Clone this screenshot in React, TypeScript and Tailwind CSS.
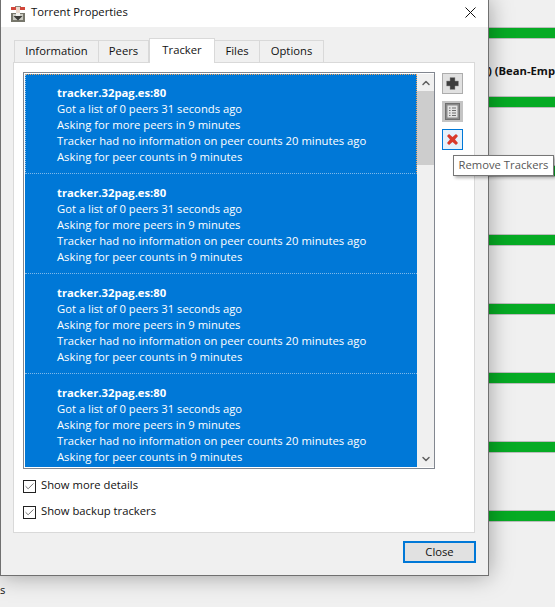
import { Check, ChevronDown, ChevronUp } from 'lucide-react';

const FONT = 'font-["Open_Sans","Noto_Sans",sans-serif]';

function TorrentIcon() {
  return (
    <svg width="16" height="16" viewBox="0 0 16 16" className="shrink-0">
      <rect x="1" y="7" width="14" height="9" fill="#77776c" />
      <rect x="3" y="8" width="10" height="6" fill="#c9c9c0" />
      <rect x="6" y="6" width="4" height="5" fill="#f2f2ee" />
      <path d="M3.5 10 H12.5 L8 14.5 Z" fill="#3c3c38" />
      <rect x="5" y="0" width="6" height="1" fill="#8a8a80" />
      <rect x="1" y="1" width="5" height="3" fill="#d2473a" />
      <rect x="10" y="1" width="5" height="3" fill="#d2473a" />
      <rect x="6" y="1" width="4" height="6" fill="#e9d8cc" />
    </svg>
  );
}

function Tab({ label, active, width }: { label: string; active?: boolean; width: string }) {
  if (active) {
    return (
      <div className={`${width} h-[25px] -mb-px z-10 flex items-center justify-center bg-white border border-b-0 border-[#d9d9d9]`}>
        <span className="-mt-[2px]">{label}</span>
      </div>
    );
  }
  return (
    <div className={`${width} h-[22px] flex items-center justify-center bg-[#f0f0f0] border border-b-0 border-l-0 first:border-l border-[#d9d9d9]`}>
      {label}
    </div>
  );
}

function TrackerItem({ first }: { first?: boolean }) {
  return (
    <div
      className={`h-[100px] shrink-0 leading-[16px] border-b border-dotted border-[#7fb9ea] ${
        first
          ? 'pl-[31px] pt-[10px] border-t border-x border-t-[#f0a35c] border-r-[#f0a35c] border-l-[#9cc8ee]'
          : 'pl-[32px] pt-[11px]'
      }`}
    >
      <div className="font-bold">tracker.32pag.es:80</div>
      <div>Got a list of 0 peers 31 seconds ago</div>
      <div>Asking for more peers in 9 minutes</div>
      <div>Tracker had no information on peer counts 20 minutes ago</div>
      <div>Asking for peer counts in 9 minutes</div>
    </div>
  );
}

function CheckRow({ label }: { label: string }) {
  return (
    <div className="flex items-center gap-[5px] h-[14px]">
      <div className="w-[13px] h-[13px] border border-[#222] bg-white flex items-center justify-center">
        <Check size={13} strokeWidth={1.8} className="text-[#555]" />
      </div>
      <span className="-mt-[2px]">{label}</span>
    </div>
  );
}

function SideButton({ children, tone }: { children: React.ReactNode; tone: 'plain' | 'off' | 'hover' }) {
  const cls =
    tone === 'hover'
      ? 'border-[#0078d7] bg-[#e5f1fb]'
      : tone === 'off'
        ? 'border-[#c4c4c4] bg-[#c4c4c4]'
        : 'border-[#adadad] bg-[#e1e1e1]';
  return <div className={`w-[21px] h-[21px] border flex items-center justify-center ${cls}`}>{children}</div>;
}

function BackgroundRow({ text }: { text?: string }) {
  return (
    <div className="h-[69px] shrink-0">
      <div className="h-[12px] bg-[#06ab24] border-y border-[#bdbdbd]" />
      {text && (
        <div className="flex justify-end pt-[24px] text-[11.25px] leading-[16px] font-bold text-[#111] whitespace-nowrap">{text}</div>
      )}
    </div>
  );
}

export default function App() {
  return (
    <div className={`relative w-[555px] h-[607px] overflow-hidden bg-[#f0f0f0] text-[11.25px] ${FONT}`}>
      {/* app behind the dialog */}
      <div className="flex flex-col pt-[27px]">
        <BackgroundRow text=") (Bean-Emp" />
        <BackgroundRow />
        <BackgroundRow />
        <BackgroundRow />
        <BackgroundRow />
        <BackgroundRow />
        <BackgroundRow />
        <BackgroundRow />
        <div className="pt-[3px] text-[11.25px] leading-[16px] text-[#111]">s</div>
      </div>

      {/* dialog */}
      <div className="absolute left-0 -top-px w-[489px] h-[577px] flex flex-col bg-[#f0f0f0] border border-[#707070] shadow-[0_0_22px_rgba(0,0,0,0.35)] text-[#111]">
        <div className="h-[27px] bg-white flex items-center pl-[9px] pr-[12px] gap-[5px] text-[11.25px]">
          <TorrentIcon />
          <span className="flex-1 -mt-[2px]">Torrent Properties</span>
          <svg width="11" height="11" viewBox="0 0 11 11" className="stroke-[#111] -mt-[2px]">
            <path d="M0.5 0.5 L10.5 10.5 M10.5 0.5 L0.5 10.5" strokeWidth="1" />
          </svg>
        </div>

        <div className="flex-1 pl-[12px] pr-[13px] pt-[11px] flex flex-col">
          <div className="flex items-end pl-[1px] h-[24px]">
            <Tab label="Information" width="w-[85px]" />
            <Tab label="Peers" width="w-[50px]" />
            <Tab label="Tracker" active width="w-[66px]" />
            <Tab label="Files" width="w-[45px]" />
            <Tab label="Options" width="w-[64px]" />
          </div>

          <div className="w-[462px] h-[471px] bg-white border border-[#d9d9d9] pl-[9px] pt-[9px]">
            <div className="flex gap-[7px]">
              <div className="w-[412px] h-[397px] border border-[#828790] p-px pr-0 flex">
                <div className="w-[392px] h-full bg-[#0078d7] text-white overflow-hidden flex flex-col">
                  <TrackerItem first />
                  <TrackerItem />
                  <TrackerItem />
                  <TrackerItem />
                </div>
                <div className="flex-1 bg-[#f0f0f0] flex flex-col items-center">
                  <div className="h-[17px] flex items-center justify-center">
                    <ChevronUp size={12} strokeWidth={3} className="text-[#606060]" />
                  </div>
                  <div className="w-full h-[74px] bg-[#cdcdcd]" />
                  <div className="flex-1" />
                  <div className="h-[17px] flex items-center justify-center">
                    <ChevronDown size={12} strokeWidth={3} className="text-[#606060]" />
                  </div>
                </div>
              </div>

              <div className="flex flex-col gap-[7px] pt-px">
                <SideButton tone="plain">
                  <svg width="15" height="15" viewBox="0 0 15 15">
                    <path d="M5 1.5 H10 V5 H13.5 V10 H10 V13.5 H5 V10 H1.5 V5 H5 Z" fill="#3d3d3d" stroke="#9a9a9a" strokeWidth="0.5" />
                  </svg>
                </SideButton>
                <SideButton tone="off">
                  <svg width="15" height="17" viewBox="0 0 15 17">
                    <rect x="0.5" y="0.5" width="14" height="16" fill="#8a8a8a" stroke="#6f6f6f" />
                    <rect x="2.5" y="2.5" width="10" height="12" fill="#e4e4e4" />
                    <path d="M4 5 H5.5 M7 5 H11 M4 7.5 H5.5 M7 7.5 H11 M4 10 H5.5 M7 10 H11 M4 12.5 H5.5 M7 12.5 H11" stroke="#6f6f6f" strokeWidth="1" />
                  </svg>
                </SideButton>
                <SideButton tone="hover">
                  <svg width="13" height="13" viewBox="0 0 13 13">
                    <path d="M3 1 L6.5 4 L10 1 L12 3 L9 6.5 L12 10 L10 12 L6.5 9 L3 12 L1 10 L4 6.5 L1 3 Z" fill="#d93a2b" />
                  </svg>
                </SideButton>
              </div>
            </div>

            <div className="flex flex-col gap-[12px] pt-[10px]">
              <CheckRow label="Show more details" />
              <CheckRow label="Show backup trackers" />
            </div>
          </div>

          <div className="flex justify-end pt-[8px]">
            <div className="w-[73px] h-[22px] -mr-[1px] border-2 border-[#0078d7] bg-[#e1e1e1] flex items-center justify-center">
              Close
            </div>
          </div>
        </div>
      </div>

      {/* tooltip */}
      <div className="absolute left-[453px] top-[155px] w-[101px] h-[21px] bg-white border border-[#767676] text-[#575757] flex items-center justify-center whitespace-nowrap shadow-[2px_2px_3px_rgba(0,0,0,0.3)]">
        Remove Trackers
      </div>
    </div>
  );
}
